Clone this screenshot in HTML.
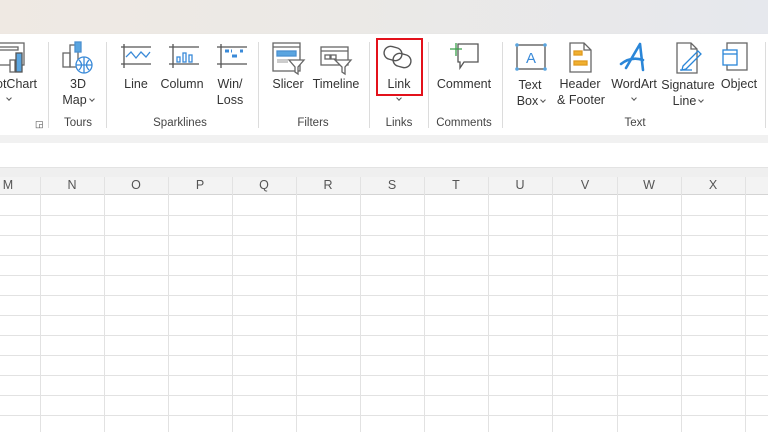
<!DOCTYPE html>
<html><head><meta charset="utf-8"><style>
*{margin:0;padding:0;box-sizing:border-box}
body{width:768px;height:432px;overflow:hidden;position:relative;background:#fff;font-family:"Liberation Sans",sans-serif;color:#333}
.top{position:absolute;left:0;top:0;width:768px;height:34px;background:linear-gradient(90deg,#efe9e3,#ebe9e6 45%,#e6e8ed)}
.rib{position:absolute;left:0;top:34px;width:768px;height:101px;background:#fff;box-shadow:0 2px 3px rgba(0,0,0,.12)}
.strip{position:absolute;left:0;top:135px;width:768px;height:8px;background:#f1f1f1}
.fbar{position:absolute;left:0;top:143px;width:768px;height:24px;background:#fff}
.strip2{position:absolute;left:0;top:167px;width:768px;height:10px;background:#efefef;border-top:1px solid #e3e3e3}
.hdr{position:absolute;left:0;top:177px;width:768px;height:18px;background:#f3f3f3;border-bottom:1px solid #d4d4d4}
.l{position:absolute;font-size:12.5px;color:#333;text-align:center;white-space:nowrap;line-height:16px}
.g{position:absolute;font-size:11.5px;color:#444;text-align:center;top:117px;white-space:nowrap}
.sep{position:absolute;top:42px;width:1px;height:86px;background:#dcdcdc}
.ch{position:absolute;top:178px;font-size:12.5px;color:#555;width:20px;margin-left:-10px;text-align:center}
.vl{position:absolute;top:177px;width:1px;height:255px;background:#e2e2e2}
.hl{position:absolute;left:0;width:768px;height:1px;background:#e2e2e2}
.cv{display:inline-block;width:4px;height:4px;border-right:1px solid #555;border-bottom:1px solid #555;transform:rotate(45deg);vertical-align:3px;margin-left:3px}
.cva{position:absolute;width:4px;height:4px;border-right:1px solid #555;border-bottom:1px solid #555;transform:rotate(45deg)}
svg{position:absolute}
</style></head><body>
<div class="top"></div>
<div class="rib"></div>
<div class="strip"></div><div class="fbar"></div><div class="strip2"></div>
<div class="hdr"></div>

<!-- icons -->
<svg style="left:0;top:42px" width="30" height="32" viewBox="0 0 30 32" fill="none" stroke="#666" stroke-width="1.3"><rect x="-6" y="1" width="30" height="22"/><rect x="-2" y="5" width="20" height="3"/><rect x="10" y="18" width="5" height="12" fill="#fff"/><rect x="16" y="11" width="6" height="19" fill="#5aa5e0" stroke="#555"/></svg>
<svg style="left:61px;top:41px" width="36" height="34" viewBox="0 0 36 34" fill="none" stroke="#666" stroke-width="1.3"><rect x="2" y="12" width="7" height="14"/><rect x="9" y="4" width="8" height="22"/><rect x="14" y="1" width="6" height="10" fill="#5aa5e0" stroke="#4a90d0"/><circle cx="23" cy="24" r="8" fill="#fff" stroke="#3a8ad8"/><path d="M15 24h16M23 16v16M18 19q5 5 0 10M28 19q-5 5 0 10" stroke="#3a8ad8"/></svg>
<svg style="left:120px;top:44px" width="32" height="24" fill="none" stroke="#555" stroke-width="1.3"><path d="M1 3h30M1 20h30M4 0v24"/><path d="M6 13l5-5 5 6 5-6 5 5 4-5" stroke="#3a8ad8"/></svg>
<svg style="left:168px;top:44px" width="32" height="24" fill="none" stroke="#555" stroke-width="1.3"><path d="M1 3h30M1 20h30M5 0v24"/><rect x="9" y="13" width="3" height="5" stroke="#3a8ad8"/><rect x="15" y="9" width="3" height="9" stroke="#3a8ad8"/><rect x="21" y="11" width="3" height="7" stroke="#3a8ad8"/></svg>
<svg style="left:216px;top:44px" width="32" height="24" fill="none" stroke="#555" stroke-width="1.3"><path d="M1 3h30M1 20h30M5 0v24"/><path d="M9 7h4M15 7h1M16 12h5M24 7h3" stroke="#3a8ad8" stroke-width="3"/></svg>
<svg style="left:272px;top:42px" width="34" height="34" fill="none" stroke="#666" stroke-width="1.3"><rect x="1" y="1" width="27" height="28"/><path d="M1 5h27"/><rect x="5" y="9" width="19" height="5" fill="#5aa5e0" stroke="#4a90d0"/><rect x="5" y="17" width="11" height="4" fill="#ccc" stroke="none"/><path d="M17 18h15l-6 7v7l-3-2v-5z" fill="#fff"/></svg>
<svg style="left:320px;top:46px" width="34" height="30" fill="none" stroke="#666" stroke-width="1.3"><rect x="1" y="1" width="27" height="18"/><path d="M1 5h27"/><rect x="5" y="9" width="5" height="4"/><rect x="11" y="9" width="5" height="4"/><path d="M15 14h16l-6 7v7l-3-2v-5z" fill="#fff"/></svg>
<svg style="left:382px;top:44px" width="34" height="28" fill="none" stroke="#555" stroke-width="1.4"><rect x="2" y="3" width="18" height="13" rx="6.5" transform="rotate(15 11 9.5)"/><rect x="11" y="10" width="18" height="13" rx="6.5" transform="rotate(15 20 16.5)"/></svg>
<svg style="left:448px;top:41px" width="34" height="30" fill="none" stroke="#555" stroke-width="1.3"><path d="M10 3h20v18H16l-4 6v-6H10z"/><path d="M2 8h12M8 2v13" stroke="#3aa04a"/></svg>
<svg style="left:514px;top:43px" width="34" height="30" fill="none" stroke="#555" stroke-width="1.3"><rect x="3" y="2" width="28" height="24"/><circle cx="3" cy="2" r="1.8" fill="#5aa5e0" stroke="none"/><circle cx="31" cy="2" r="1.8" fill="#5aa5e0" stroke="none"/><circle cx="3" cy="26" r="1.8" fill="#5aa5e0" stroke="none"/><circle cx="31" cy="26" r="1.8" fill="#5aa5e0" stroke="none"/><text x="17" y="20" font-family="Liberation Sans" font-size="15" fill="#3a8ad8" stroke="none" text-anchor="middle">A</text></svg>
<svg style="left:566px;top:42px" width="30" height="32" fill="none" stroke="#666" stroke-width="1.3"><path d="M4 1h14l7 7v22H4z M18 1v7h7"/><rect x="8" y="9" width="8" height="4" fill="#f0b030" stroke="#e09a20"/><rect x="8" y="19" width="13" height="4" fill="#f0b030" stroke="#e09a20"/></svg>
<svg style="left:618px;top:42px" width="30" height="32" fill="none" stroke="#2a86d8" stroke-width="2.6" stroke-linecap="round"><path d="M22 2L8 26M22 2l3 26M3 22q10-8 22-4"/></svg>
<svg style="left:674px;top:42px" width="32" height="32" fill="none" stroke="#666" stroke-width="1.3"><path d="M3 1h14l6 6v24H3z M17 1v6h6"/><path d="M9 24L24 9l3 3-15 15-4 1z" stroke="#2a86d8"/><path d="M6 28h12" stroke="#2a86d8"/></svg>
<svg style="left:722px;top:42px" width="30" height="32" fill="none" stroke="#666" stroke-width="1.3"><rect x="5" y="1" width="20" height="27"/><rect x="1" y="8" width="14" height="15" fill="#fff" stroke="#2a86d8"/><path d="M1 12h14" stroke="#2a86d8"/></svg>

<!-- labels -->
<div class="l" style="left:0;top:76px;width:40px;text-align:left;margin-left:-4px">otChart</div>
<div class="cva" style="left:7px;top:96px"></div>
<div class="l" style="left:60px;top:76px;width:36px">3D</div>
<div class="l" style="left:55px;top:92px;width:46px">Map<span class="cv"></span></div>
<div class="l" style="left:116px;top:76px;width:40px">Line</div>
<div class="l" style="left:158px;top:76px;width:48px">Column</div>
<div class="l" style="left:210px;top:76px;width:40px">Win/</div>
<div class="l" style="left:210px;top:92px;width:40px">Loss</div>
<div class="l" style="left:268px;top:76px;width:40px">Slicer</div>
<div class="l" style="left:310px;top:76px;width:52px">Timeline</div>
<div class="l" style="left:380px;top:76px;width:38px">Link</div>
<div class="cva" style="left:397px;top:96px"></div>
<div class="l" style="left:434px;top:76px;width:60px">Comment</div>
<div class="l" style="left:510px;top:77px;width:40px">Text</div>
<div class="l" style="left:508px;top:93px;width:46px">Box<span class="cv"></span></div>
<div class="l" style="left:556px;top:76px;width:48px">Header</div>
<div class="l" style="left:552px;top:92px;width:58px">&amp; Footer</div>
<div class="l" style="left:608px;top:76px;width:52px">WordArt</div>
<div class="cva" style="left:632px;top:96px"></div>
<div class="l" style="left:660px;top:77px;width:56px">Signature</div>
<div class="l" style="left:660px;top:93px;width:56px">Line<span class="cv"></span></div>
<div class="l" style="left:718px;top:76px;width:42px">Object</div>
<div style="position:absolute;left:376px;top:38px;width:47px;height:58px;border:2px solid #e3111b"></div>

<div class="g" style="left:35px;font-size:9px;top:119px">◲</div>
<div class="g" style="left:58px;width:40px">Tours</div>
<div class="g" style="left:140px;width:80px">Sparklines</div>
<div class="g" style="left:293px;width:40px">Filters</div>
<div class="g" style="left:380px;width:38px">Links</div>
<div class="g" style="left:433px;width:62px">Comments</div>
<div class="g" style="left:610px;width:50px">Text</div>

<div class="sep" style="left:48px"></div><div class="sep" style="left:106px"></div><div class="sep" style="left:258px"></div><div class="sep" style="left:369px"></div><div class="sep" style="left:428px"></div><div class="sep" style="left:502px"></div><div class="sep" style="left:765px"></div>

<!-- grid -->
<div class="hl" style="top:215px"></div><div class="hl" style="top:235px"></div><div class="hl" style="top:255px"></div><div class="hl" style="top:275px"></div><div class="hl" style="top:295px"></div><div class="hl" style="top:315px"></div><div class="hl" style="top:335px"></div><div class="hl" style="top:355px"></div><div class="hl" style="top:375px"></div><div class="hl" style="top:395px"></div><div class="hl" style="top:415px"></div>
<div class="vl" style="left:40px"></div><div class="vl" style="left:104px"></div><div class="vl" style="left:168px"></div><div class="vl" style="left:232px"></div><div class="vl" style="left:296px"></div><div class="vl" style="left:360px"></div><div class="vl" style="left:424px"></div><div class="vl" style="left:488px"></div><div class="vl" style="left:552px"></div><div class="vl" style="left:617px"></div><div class="vl" style="left:681px"></div><div class="vl" style="left:745px"></div>
<div class="ch" style="left:8px">M</div><div class="ch" style="left:72px">N</div><div class="ch" style="left:136px">O</div><div class="ch" style="left:200px">P</div><div class="ch" style="left:264px">Q</div><div class="ch" style="left:328px">R</div><div class="ch" style="left:392px">S</div><div class="ch" style="left:456px">T</div><div class="ch" style="left:520px">U</div><div class="ch" style="left:585px">V</div><div class="ch" style="left:649px">W</div><div class="ch" style="left:713px">X</div>
</body></html>
